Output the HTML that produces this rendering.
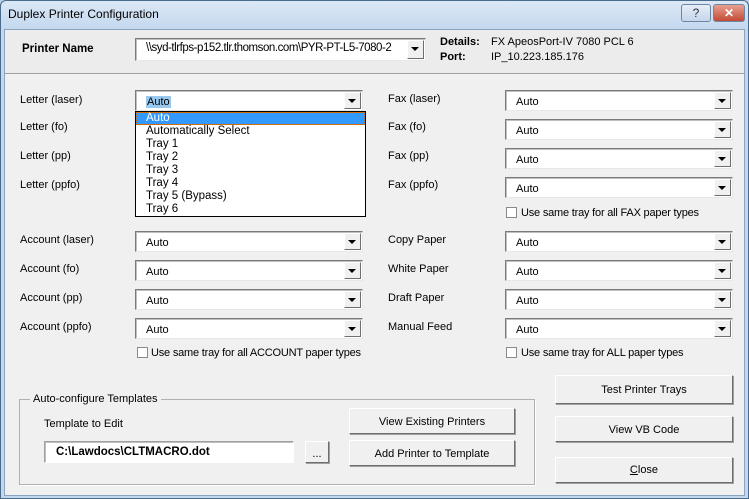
<!DOCTYPE html>
<html><head><meta charset="utf-8"><style>
*{box-sizing:border-box}
body{margin:0;width:749px;height:499px;overflow:hidden;font-family:"Liberation Sans",sans-serif;font-size:11px;color:#000;background:#b9d1ea}
.win{position:absolute;left:0;top:0;width:749px;height:499px;border:1px solid #4a6c8c;border-radius:6px 6px 0 0;background:linear-gradient(#dbe8f6,#c3d7ee 30px);}
.title{position:absolute;left:7px;top:6px;font-size:12px}
.body{position:absolute;left:3px;top:28px;width:741px;height:467px;background:#f0f0f0;border:1px solid #8ba3bf}
.hdr{position:absolute;left:0;top:0;width:739px;height:44px;border-bottom:1px solid #a0a0a0;background:#ececec}
.a{position:absolute;white-space:nowrap}
.cb{position:absolute;width:228px;height:21px;background:#fff;border:1px solid;border-color:#7a7a7a #e8e8e8 #e8e8e8 #7a7a7a;box-shadow:inset 1px 1px 0 #bfbfbf}
.cb span{position:absolute;left:10px;top:5px}
.cb i{position:absolute;right:1px;top:1px;width:17px;height:17px;background:#f0f0f0;border:1px solid;border-color:#fff #6e6e6e #6e6e6e #fff}
.cb i:after{content:"";position:absolute;left:3px;top:6px;border:4px solid transparent;border-top:4px solid #000}
.chk{position:absolute;width:11px;height:11px;background:#fff;border:1px solid #8a8a8a}
.btn{position:absolute;background:#f0f0f0;border:1px solid;border-color:#fff #6e6e6e #6e6e6e #fff;box-shadow:1px 1px 0 #a0a0a0;text-align:center}
.tb{position:absolute;top:3px;width:30px;height:18px;border:1px solid #6c86a4;border-radius:3px}
</style></head><body>
<div class="win">
<div class="title">Duplex Printer Configuration</div>
<div class="tb" style="left:680px;background:linear-gradient(#e6eef8,#c6d6ea);text-align:center;font-size:12px;line-height:16px;color:#334">?</div>
<div class="tb" style="left:712px;width:32px;background:linear-gradient(#e8a090,#c24a36);color:#fff;text-align:center;font-weight:bold;font-size:12px;line-height:16px">✕</div>
<div class="body">
<div class="hdr"></div>
</div>
</div>
<div class="a" style="left:22px;top:43px;font-weight:bold;font-size:11.5px">Printer Name</div>
<div class="cb" style="left:135px;top:38px;width:291px;height:23px"><span style="left:10px;top:3px;font-size:11.5px;letter-spacing:-0.45px">\\syd-tlrfps-p152.tlr.thomson.com\PYR-PT-L5-7080-2</span><i style="height:19px"></i></div>
<div class="a" style="left:440px;top:36px;font-weight:bold">Details:</div>
<div class="a" style="left:491px;top:36px">FX ApeosPort-IV 7080 PCL 6</div>
<div class="a" style="left:440px;top:51px;font-weight:bold">Port:</div>
<div class="a" style="left:491px;top:51px">IP_10.223.185.176</div>

<div class="a" style="left:20px;top:94px">Letter (laser)</div>
<div class="a" style="left:20px;top:121px">Letter (fo)</div>
<div class="a" style="left:20px;top:150px">Letter (pp)</div>
<div class="a" style="left:20px;top:179px">Letter (ppfo)</div>
<div class="a" style="left:20px;top:234px">Account (laser)</div>
<div class="a" style="left:20px;top:263px">Account (fo)</div>
<div class="a" style="left:20px;top:292px">Account (pp)</div>
<div class="a" style="left:20px;top:321px">Account (ppfo)</div>

<div class="a" style="left:388px;top:93px">Fax (laser)</div>
<div class="a" style="left:388px;top:121px">Fax (fo)</div>
<div class="a" style="left:388px;top:150px">Fax (pp)</div>
<div class="a" style="left:388px;top:179px">Fax (ppfo)</div>
<div class="a" style="left:388px;top:234px">Copy Paper</div>
<div class="a" style="left:388px;top:263px">White Paper</div>
<div class="a" style="left:388px;top:292px">Draft Paper</div>
<div class="a" style="left:388px;top:321px">Manual Feed</div>

<div class="cb" style="left:135px;top:90px"><span style="left:10px;background:#99c9ef;padding:0 1px">Auto</span><i></i></div>
<div class="cb" style="left:135px;top:231px"><span>Auto</span><i></i></div>
<div class="cb" style="left:135px;top:260px"><span>Auto</span><i></i></div>
<div class="cb" style="left:135px;top:289px"><span>Auto</span><i></i></div>
<div class="cb" style="left:135px;top:318px"><span>Auto</span><i></i></div>
<div class="cb" style="left:505px;top:90px"><span>Auto</span><i></i></div>
<div class="cb" style="left:505px;top:119px"><span>Auto</span><i></i></div>
<div class="cb" style="left:505px;top:148px"><span>Auto</span><i></i></div>
<div class="cb" style="left:505px;top:177px"><span>Auto</span><i></i></div>
<div class="cb" style="left:505px;top:231px"><span>Auto</span><i></i></div>
<div class="cb" style="left:505px;top:260px"><span>Auto</span><i></i></div>
<div class="cb" style="left:505px;top:289px"><span>Auto</span><i></i></div>
<div class="cb" style="left:505px;top:318px"><span>Auto</span><i></i></div>

<div class="chk" style="left:506px;top:207px"></div>
<div class="a" style="left:521px;top:207px;letter-spacing:-0.2px">Use same tray for all FAX paper types</div>
<div class="chk" style="left:137px;top:347px"></div>
<div class="a" style="left:151px;top:347px;letter-spacing:-0.2px">Use same tray for all ACCOUNT paper types</div>
<div class="chk" style="left:506px;top:347px"></div>
<div class="a" style="left:521px;top:347px;letter-spacing:-0.2px">Use same tray for ALL paper types</div>

<div style="position:absolute;left:135px;top:111px;width:231px;height:106px;background:#fff;border:1px solid #000;font-size:11.5px;line-height:13px">
<div style="background:#3399ff;color:#fff;padding-left:10px;outline:1px dotted #c60;outline-offset:-1px">Auto</div>
<div style="padding-left:10px">Automatically Select</div>
<div style="padding-left:10px">Tray 1</div>
<div style="padding-left:10px">Tray 2</div>
<div style="padding-left:10px">Tray 3</div>
<div style="padding-left:10px">Tray 4</div>
<div style="padding-left:10px">Tray 5 (Bypass)</div>
<div style="padding-left:10px">Tray 6</div>
</div>

<div style="position:absolute;left:19px;top:399px;width:516px;height:86px;border:1px solid #b0b0b0;box-shadow:1px 1px 0 #fff"></div>
<div class="a" style="left:30px;top:393px;background:#f0f0f0;padding:0 3px">Auto-configure Templates</div>
<div class="a" style="left:44px;top:418px">Template to Edit</div>
<div class="cb" style="left:44px;top:441px;width:250px;height:22px;border-color:#a0a0a0 #fff #fff #a0a0a0"><span style="left:11px;top:4px;font-weight:bold;font-size:11.5px">C:\Lawdocs\CLTMACRO.dot</span></div>
<div class="btn" style="left:305px;top:441px;width:24px;height:22px;line-height:24px">...</div>
<div class="btn" style="left:349px;top:408px;width:166px;height:26px;line-height:26px">View Existing Printers</div>
<div class="btn" style="left:349px;top:440px;width:166px;height:26px;line-height:26px">Add Printer to Template</div>
<div class="btn" style="left:555px;top:375px;width:178px;height:29px;line-height:28px">Test Printer Trays</div>
<div class="btn" style="left:555px;top:416px;width:178px;height:26px;line-height:27px">View VB Code</div>
<div class="btn" style="left:555px;top:457px;width:178px;height:26px;line-height:25px"><u>C</u>lose</div>
</body></html>
